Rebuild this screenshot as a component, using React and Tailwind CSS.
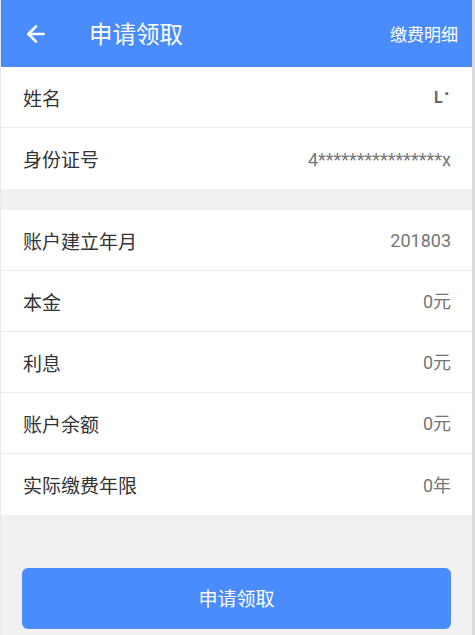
import { ArrowLeft } from 'lucide-react'

const CJK = { fontFamily: '"Noto Sans CJK SC", "Noto Sans", sans-serif' }
const NUM = { fontFamily: 'Roboto, "Noto Sans CJK SC", sans-serif' }

const identity = [
  { label: '姓名', value: 'L·', name: true },
  { label: '身份证号', value: '4****************x' },
]

const account = [
  { label: '账户建立年月', value: '201803' },
  { label: '本金', value: '0元' },
  { label: '利息', value: '0元' },
  { label: '账户余额', value: '0元' },
  { label: '实际缴费年限', value: '0年' },
]

function Row({ label, value, name, last }) {
  return (
    <div className={`flex items-center justify-between h-[61px] pl-[22px] pr-[21px] bg-white ${last ? '' : 'border-b border-[#ececec]'}`}>
      <span style={CJK} className="text-[19px] leading-none text-[#333]">{label}</span>
      {name ? (
        <span style={NUM} className="pt-[2px] text-[16px] leading-none font-bold text-[#6a6a6a] tracking-tighter">L<span className="text-[10px] align-top">▪</span></span>
      ) : (
        <span style={NUM} className="pt-[2px] text-[18px] leading-none text-[#767676]">{value}</span>
      )}
    </div>
  )
}

export default function App() {
  return (
    <div style={CJK} className="w-[475px] h-[635px] flex flex-col bg-[#f1f1f1] border-l border-r-[3px] border-l-[#e8e8e8] border-r-[#dcdcdc] overflow-hidden">
      <header className="h-[67px] shrink-0 flex items-center bg-[#4a8cfd] text-white">
        <ArrowLeft className="ml-[22px] w-[26px] h-[26px]" strokeWidth={2.5} />
        <h1 className="ml-[40px] text-[23.5px] font-normal">申请领取</h1>
        <span className="ml-auto mr-[14px] text-[17px]">缴费明细</span>
      </header>
      <section>
        {identity.map((r, i) => (
          <Row key={r.label} {...r} last={i === identity.length - 1} />
        ))}
      </section>
      <div className="h-[21px] shrink-0" />
      <section>
        {account.map((r, i) => (
          <Row key={r.label} {...r} last={i === account.length - 1} />
        ))}
      </section>
      <div className="flex-1 flex flex-col justify-end px-[21px] pb-[6px]">
        <button type="button" className="h-[61px] w-full rounded-[6px] bg-[#4a8cfd] text-white text-[19px]">
          申请领取
        </button>
      </div>
    </div>
  )
}
